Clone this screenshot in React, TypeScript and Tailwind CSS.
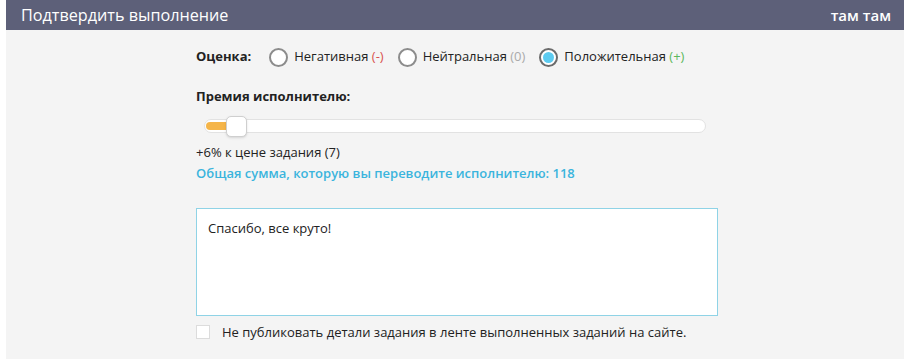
import { useState } from "react";

type Rating = "neg" | "neu" | "pos";

const ratings: { value: Rating; label: string; mark: string; markClass: string }[] = [
  { value: "neg", label: "Негативная", mark: "(-)", markClass: "text-[#d9534f]" },
  { value: "neu", label: "Нейтральная", mark: "(0)", markClass: "text-[#aaaaaa]" },
  { value: "pos", label: "Положительная", mark: "(+)", markClass: "text-[#5cb85c]" },
];

function Radio({ checked }: { checked: boolean }) {
  return (
    <span
      className={`flex h-[19px] w-[19px] items-center justify-center rounded-full border-2 bg-white ${
        checked ? "border-[#6b6b6b]" : "border-[#8c8c8c]"
      }`}
    >
      {checked ? <span className="h-[11px] w-[11px] rounded-full bg-[#5ccbf0]" /> : null}
    </span>
  );
}

export default function App() {
  const [rating, setRating] = useState<Rating>("pos");
  const [hidden, setHidden] = useState(false);
  const bonus = 6;

  return (
    <div className="h-[359px] w-[907px] bg-white pl-[6px] pr-[3px] font-['Open_Sans',sans-serif] text-[13px] text-[#222]">
      <div className="flex h-[30px] items-center justify-between bg-[#5d6079] pl-[15px] pr-[13px] text-white">
        <span className="text-[16.2px]">Подтвердить выполнение</span>
        <span className="text-[15px] font-semibold">там там</span>
      </div>

      <div className="h-[329px] bg-[#f4f4f4] pl-[4px]">
        <div className="mx-auto w-[522px] pt-[14px]">
          <div className="flex h-[26px] items-center">
            <span className="mr-[18px] font-bold">Оценка:</span>
            {ratings.map((r) => (
              <button
                key={r.value}
                type="button"
                onClick={() => setRating(r.value)}
                className="mr-[14px] flex items-center gap-[6px]"
              >
                <Radio checked={rating === r.value} />
                <span>
                  {r.label} <span className={r.markClass}>{r.mark}</span>
                </span>
              </button>
            ))}
          </div>

          <div className="mt-[17px] font-bold">Премия исполнителю:</div>

          <div className="relative mt-[12px] ml-[8px] h-[14px] w-[502px] rounded-full border border-[#e2e2e2] bg-white">
            <div className="absolute left-[1px] top-[2px] h-[8px] w-[28px] rounded-full bg-[#f5b549]" />
            <div className="absolute left-[21px] top-[-4px] h-[21px] w-[21px] rounded-[5px] border border-[#cfcfcf] bg-white shadow-sm" />
          </div>

          <div className="mt-[10px]">+{bonus}% к цене задания (7)</div>
          <div className="mt-[2px] font-semibold text-[#3bb4dd]">
            Общая сумма, которую вы переводите исполнителю: 118
          </div>

          <textarea
            defaultValue="Спасибо, все круто!"
            className="mt-[24px] block h-[108px] w-[522px] resize-none border border-[#8fd3e6] bg-white py-[10px] pl-[11px] pr-[10px] text-[13px] outline-none"
          />

          <label className="mt-[7px] flex cursor-pointer items-center">
            <input
              type="checkbox"
              checked={hidden}
              onChange={() => setHidden(!hidden)}
              className="h-[14px] w-[14px] appearance-none border border-[#dcdcdc] bg-white"
            />
            <span className="ml-[12px]">Не публиковать детали задания в ленте выполненных заданий на сайте.</span>
          </label>
        </div>
      </div>
    </div>
  );
}
